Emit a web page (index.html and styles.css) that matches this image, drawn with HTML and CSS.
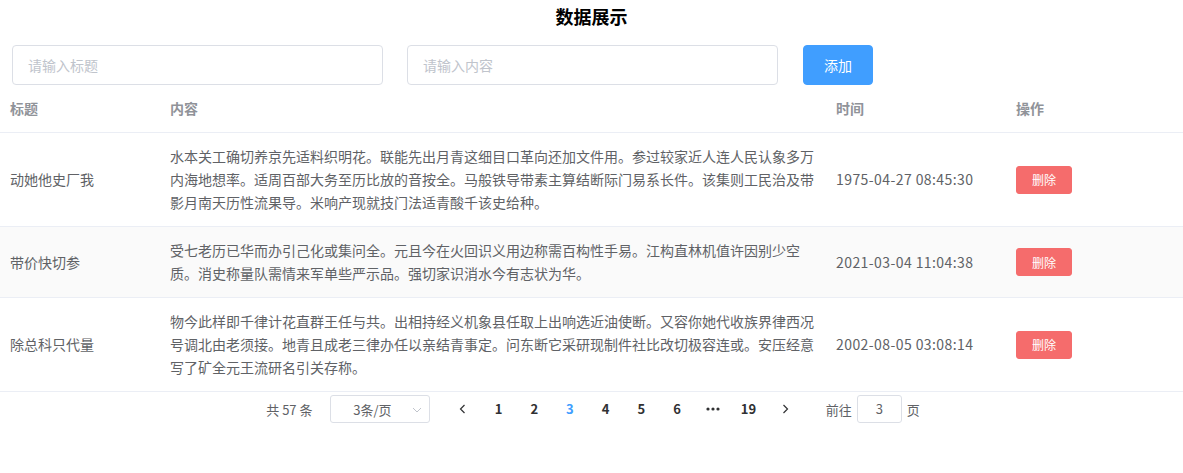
FILE: index.html
```html
<!DOCTYPE html>
<html lang="zh-CN">
<head>
<meta charset="utf-8">
<title>数据展示</title>
<link rel="stylesheet" href="styles.css">
</head>
<body>
<div class="page">
  <h3 class="title">数据展示</h3>
  <div class="form-row">
    <div class="input"><span class="placeholder">请输入标题</span></div>
    <div class="input"><span class="placeholder">请输入内容</span></div>
    <button class="btn-primary">添加</button>
  </div>
  <table class="table">
    <colgroup>
      <col class="c-title">
      <col class="c-content">
      <col class="c-time">
      <col class="c-op">
    </colgroup>
    <thead>
      <tr><th><div class="cell">标题</div></th><th><div class="cell">内容</div></th><th><div class="cell">时间</div></th><th><div class="cell">操作</div></th></tr>
    </thead>
    <tbody>
      <tr>
        <td><div class="cell">动她他史厂我</div></td>
        <td><div class="cell">水本关工确切养京先适料织明花。联能先出月青这细目口革向还加文件用。参过较家近人连人民认象多万内海地想率。适周百部大务至历比放的音按全。马般铁导带素主算结断际门易系长件。该集则工民治及带影月南天历性流果导。米响产现就技门法适青酸千该史给种。</div></td>
        <td><div class="cell time">1975-04-27 08:45:30</div></td>
        <td><div class="cell"><button class="btn-danger">删除</button></div></td>
      </tr>
      <tr class="striped">
        <td><div class="cell">带价快切参</div></td>
        <td><div class="cell">受七老历已华而办引己化或集问全。元且今在火回识义用边称需百构性手易。江构直林机值许因别少空质。消史称量队需情来军单些严示品。强切家识消水今有志状为华。</div></td>
        <td><div class="cell time">2021-03-04 11:04:38</div></td>
        <td><div class="cell"><button class="btn-danger">删除</button></div></td>
      </tr>
      <tr>
        <td><div class="cell">除总科只代量</div></td>
        <td><div class="cell">物今此样即千律计花直群王任与共。出相持经义机象县任取上出响选近油使断。又容你她代收族界律西况号调北由老须接。地青且成老三律办任以亲结青事定。问东断它采研现制件社比改切极容连或。安压经意写了矿全元王流研名引关存称。</div></td>
        <td><div class="cell time">2002-08-05 03:08:14</div></td>
        <td><div class="cell"><button class="btn-danger">删除</button></div></td>
      </tr>
    </tbody>
  </table>
  <div class="pagination">
    <span class="total">共 57 条</span>
    <div class="sizes">
      <span class="sizes-text">3条/页</span>
      <svg class="sizes-arrow" width="10" height="6" viewBox="0 0 10 6"><polyline points="1,1 5,5 9,1" fill="none" stroke="#c0c4cc" stroke-width="1"/></svg>
    </div>
    <button class="btn-prev"><svg width="7" height="10" viewBox="0 0 7 10"><polyline points="5.5,1 1.5,5 5.5,9" fill="none" stroke="#303133" stroke-width="1.2"/></svg></button>
    <ul class="pager">
      <li>1</li><li>2</li><li class="active">3</li><li>4</li><li>5</li><li>6</li><li class="more"><svg width="14" height="4" viewBox="0 0 14 4"><circle cx="2" cy="2" r="1.6" fill="#303133"/><circle cx="7" cy="2" r="1.6" fill="#303133"/><circle cx="12" cy="2" r="1.6" fill="#303133"/></svg></li><li>19</li>
    </ul>
    <button class="btn-next"><svg width="7" height="10" viewBox="0 0 7 10"><polyline points="1.5,1 5.5,5 1.5,9" fill="none" stroke="#303133" stroke-width="1.2"/></svg></button>
    <span class="jump">前往<span class="jump-input">3</span>页</span>
  </div>
</div>
</body>
</html>
```

FILE: styles.css
```css
* { box-sizing: border-box; }
html, body { margin: 0; padding: 0; background: #fff; }
body {
  font-family: "Noto Sans CJK SC", "Liberation Sans", sans-serif;
  color: #606266;
  font-size: 14px;
}
.page { width: 1183px; }
.title {
  margin: 0 0 13px;
  height: 32px;
  line-height: 32px;
  font-size: 18px;
  font-weight: bold;
  color: #000;
  text-align: center;
}
.form-row {
  display: flex;
  align-items: center;
  padding-left: 12px;
  height: 40px;
}
.input {
  width: 371px;
  height: 40px;
  border: 1px solid #dcdfe6;
  border-radius: 4px;
  padding: 0 15px;
  display: flex;
  align-items: center;
  margin-right: 24px;
}
.input + .input { margin-right: 25px; }
.placeholder { color: #c0c4cc; font-size: 14px; }
.btn-primary {
  width: 70px;
  height: 40px;
  border: 1px solid #409eff;
  background: #409eff;
  color: #fff;
  border-radius: 4px;
  font-family: inherit;
  font-size: 14px;
  padding: 0;
}
.table {
  width: 1183px;
  table-layout: fixed;
  border-collapse: collapse;
  border-spacing: 0;
}
.c-title { width: 160px; }
.c-content { width: 666px; }
.c-time { width: 180px; }
.c-op { width: 177px; }
.table th, .table td {
  padding: 12px 0;
  border-bottom: 1px solid #ebeef5;
  text-align: left;
  vertical-align: middle;
}
.table th { color: #909399; font-weight: bold; }
.cell {
  padding: 0 10px;
  line-height: 23px;
  word-break: break-all;
}
.time { letter-spacing: 0.42px; white-space: nowrap; }
.striped td { background: #fafafa; }
.btn-danger {
  width: 56px;
  height: 28px;
  border: 1px solid #f56c6c;
  background: #f56c6c;
  color: #fff;
  border-radius: 3px;
  font-family: inherit;
  font-size: 12px;
  padding: 0;
  vertical-align: middle;
}
.pagination {
  display: flex;
  justify-content: center;
  align-items: center;
  padding-top: 3px;
  padding-left: 3px;
  height: 31px;
  font-size: 13px;
  color: #606266;
}
.total { width: 64px; white-space: nowrap; }
.sizes {
  position: relative;
  width: 100px;
  height: 28px;
  border: 1px solid #dcdfe6;
  border-radius: 3px;
  display: flex;
  align-items: center;
  padding-left: 22px;
  margin-right: 14.5px;
}
.sizes-arrow { position: absolute; right: 7px; top: 11px; }
.btn-prev, .btn-next {
  height: 28px;
  width: 36px;
  border: 0;
  background: transparent;
  padding: 0;
  display: flex;
  align-items: center;
  justify-content: center;
}
.btn-next { width: 37.5px; padding-left: 1.5px; }
.pager {
  display: flex;
  list-style: none;
  margin: 0;
  padding: 0;
}
.pager li {
  width: 35.7px;
  height: 28px;
  line-height: 28px;
  text-align: center;
  font-weight: bold;
  color: #303133;
}
.pager li.more {
  display: flex;
  align-items: center;
  justify-content: center;
}
.pager li.active { color: #409eff; }
.jump {
  margin-left: 22px;
  display: flex;
  align-items: center;
}
.jump-input {
  width: 45px;
  height: 28px;
  border: 1px solid #dcdfe6;
  border-radius: 3px;
  margin: 0 5px;
  text-align: center;
  line-height: 26px;
}
```
